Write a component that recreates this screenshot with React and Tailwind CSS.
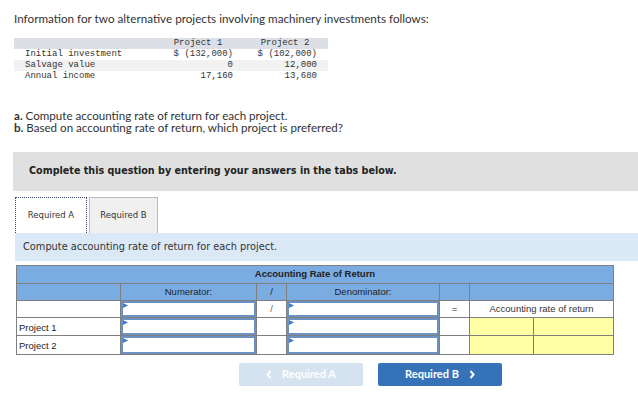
import React from 'react';

const DATA_ROWS = [
  { label: 'Initial investment', p1: '$ (132,000)', p2: '$ (102,000)', shade: false },
  { label: 'Salvage value', p1: '0', p2: '12,000', shade: true },
  { label: 'Annual income', p1: '17,160', p2: '13,680', shade: false },
];

const Flag = () => (
  <svg className="absolute left-0 top-0" width="6" height="6" viewBox="0 0 6 6">
    <polygon points="0,0 5,2.5 0,5" fill="#3b7fce" />
  </svg>
);

const InputCell = () => (
  <td className="border border-[#7f7f7f] p-0 h-[17px]">
    <div className="relative h-full border-2 border-[#6d91c0] bg-white">
      <Flag />
    </div>
  </td>
);

const Chevron = ({ dir }) => (
  <svg width="6" height="9" viewBox="0 0 6 9">
    <polyline
      points={dir === 'left' ? '4.5,1 1.5,4.5 4.5,8' : '1.5,1 4.5,4.5 1.5,8'}
      fill="none"
      stroke="white"
      strokeWidth="2"
    />
  </svg>
);

export default function App() {
  return (
    <div className="w-[638px] h-[394px] overflow-hidden bg-white text-[#333] font-['Lato',sans-serif]">
      <p className="pl-[14px] pt-[11px] text-[11.7px] leading-[14px]">
        Information for two alternative projects involving machinery investments follows:
      </p>

      <div className="ml-[14px] mt-[13px] w-[314px] font-['Liberation_Mono',monospace] text-[9px] leading-[11px] text-[#333]">
        <div className="grid grid-cols-[149px_70px_20px_64px_1fr] h-[11px] bg-[#dcdfe6]">
          <div />
          <div className="text-center">Project 1</div>
          <div />
          <div className="text-center">Project 2</div>
          <div />
        </div>
        {DATA_ROWS.map((r) => (
          <div
            key={r.label}
            className={`grid grid-cols-[149px_70px_20px_64px_1fr] h-[11px] ${r.shade ? 'bg-[#f2f2f2]' : ''}`}
          >
            <div className="pl-[11px]">{r.label}</div>
            <div className="text-right">{r.p1}</div>
            <div />
            <div className="text-right">{r.p2}</div>
            <div />
          </div>
        ))}
      </div>

      <div className="pl-[14px] mt-[27px] text-[11.6px] leading-[13px]">
        <p><span className="font-bold">a.</span> Compute accounting rate of return for each project.</p>
        <p className="-mt-px"><span className="font-bold">b.</span> Based on accounting rate of return, which project is preferred?</p>
      </div>

      <div className="ml-[13px] mt-[18px] h-[39px] bg-[#e0e0e0] flex items-center pl-[16px]">
        <span className="font-['DejaVu_Sans',sans-serif] font-bold text-[9.6px] text-[#222]">
          Complete this question by entering your answers in the tabs below.
        </span>
      </div>

      <div className="ml-[15px] mt-[6px] flex gap-[2px] h-[36px] font-['DejaVu_Sans',sans-serif] text-[8.5px] text-[#333]">
        <div className="w-[72px] bg-white border border-dotted border-b-0 border-[#334466] flex items-center justify-center">
          Required A
        </div>
        <div className="w-[69px] bg-[#f0f0f0] border border-b-0 border-[#bbbbbb] flex items-center justify-center">
          Required B
        </div>
      </div>

      <div className="ml-[15px] h-[28px] bg-[#dbe9f7] flex items-center pl-[8px] font-['DejaVu_Sans',sans-serif] text-[9.8px] text-[#333]">
        Compute accounting rate of return for each project.
      </div>

      <table className="ml-[16px] mt-[4px] w-[597px] border-collapse table-fixed font-['Liberation_Sans',Arial,sans-serif] text-[9.5px] text-[#222]">
        <colgroup>
          <col className="w-[104px]" />
          <col className="w-[136px]" />
          <col className="w-[30px]" />
          <col className="w-[153px]" />
          <col className="w-[30px]" />
          <col className="w-[64px]" />
          <col className="w-[80px]" />
        </colgroup>
        <tbody>
          <tr className="h-[18px] bg-[#7aace2]">
            <td colSpan={7} className="border border-[#7f7f7f] text-center font-bold">
              Accounting Rate of Return
            </td>
          </tr>
          <tr className="h-[17px] bg-[#7aace2]">
            <td className="border border-[#7f7f7f]" />
            <td className="border border-[#7f7f7f] text-center">Numerator:</td>
            <td className="border border-[#7f7f7f] text-center">/</td>
            <td className="border border-[#7f7f7f] text-center">Denominator:</td>
            <td className="border border-[#7f7f7f]" />
            <td colSpan={2} className="border border-[#7f7f7f]" />
          </tr>
          <tr className="h-[17px]">
            <td className="border border-[#7f7f7f]" />
            <InputCell />
            <td className="border border-[#7f7f7f] text-center text-[#666]">/</td>
            <InputCell />
            <td className="border border-[#7f7f7f] text-center">=</td>
            <td colSpan={2} className="border border-[#7f7f7f] text-center text-[#333]">
              Accounting rate of return
            </td>
          </tr>
          {['Project 1', 'Project 2'].map((p) => (
            <tr key={p} className="h-[17px]">
              <td className="border border-[#7f7f7f] pl-[2px] pt-[3px]">{p}</td>
              <InputCell />
              <td className="border border-[#7f7f7f]" />
              <InputCell />
              <td className="border border-[#7f7f7f]" />
              <td className="border border-[#7f7f7f] bg-[#ffffa6]" />
              <td className="border border-[#7f7f7f] bg-[#ffffa6]" />
            </tr>
          ))}
        </tbody>
      </table>

      <div className="ml-[239px] mt-[8px] flex gap-[15px] font-['Lato',sans-serif] font-bold text-[11px] text-white">
        <div className="w-[124px] h-[23px] rounded-[2px] bg-[#d5e2f0] flex items-center justify-center gap-[10px]">
          <Chevron dir="left" />
          <span>Required A</span>
        </div>
        <div className="w-[124px] h-[23px] rounded-[2px] bg-[#3572b8] flex items-center justify-center gap-[10px]">
          <span>Required B</span>
          <Chevron dir="right" />
        </div>
      </div>
    </div>
  );
}
